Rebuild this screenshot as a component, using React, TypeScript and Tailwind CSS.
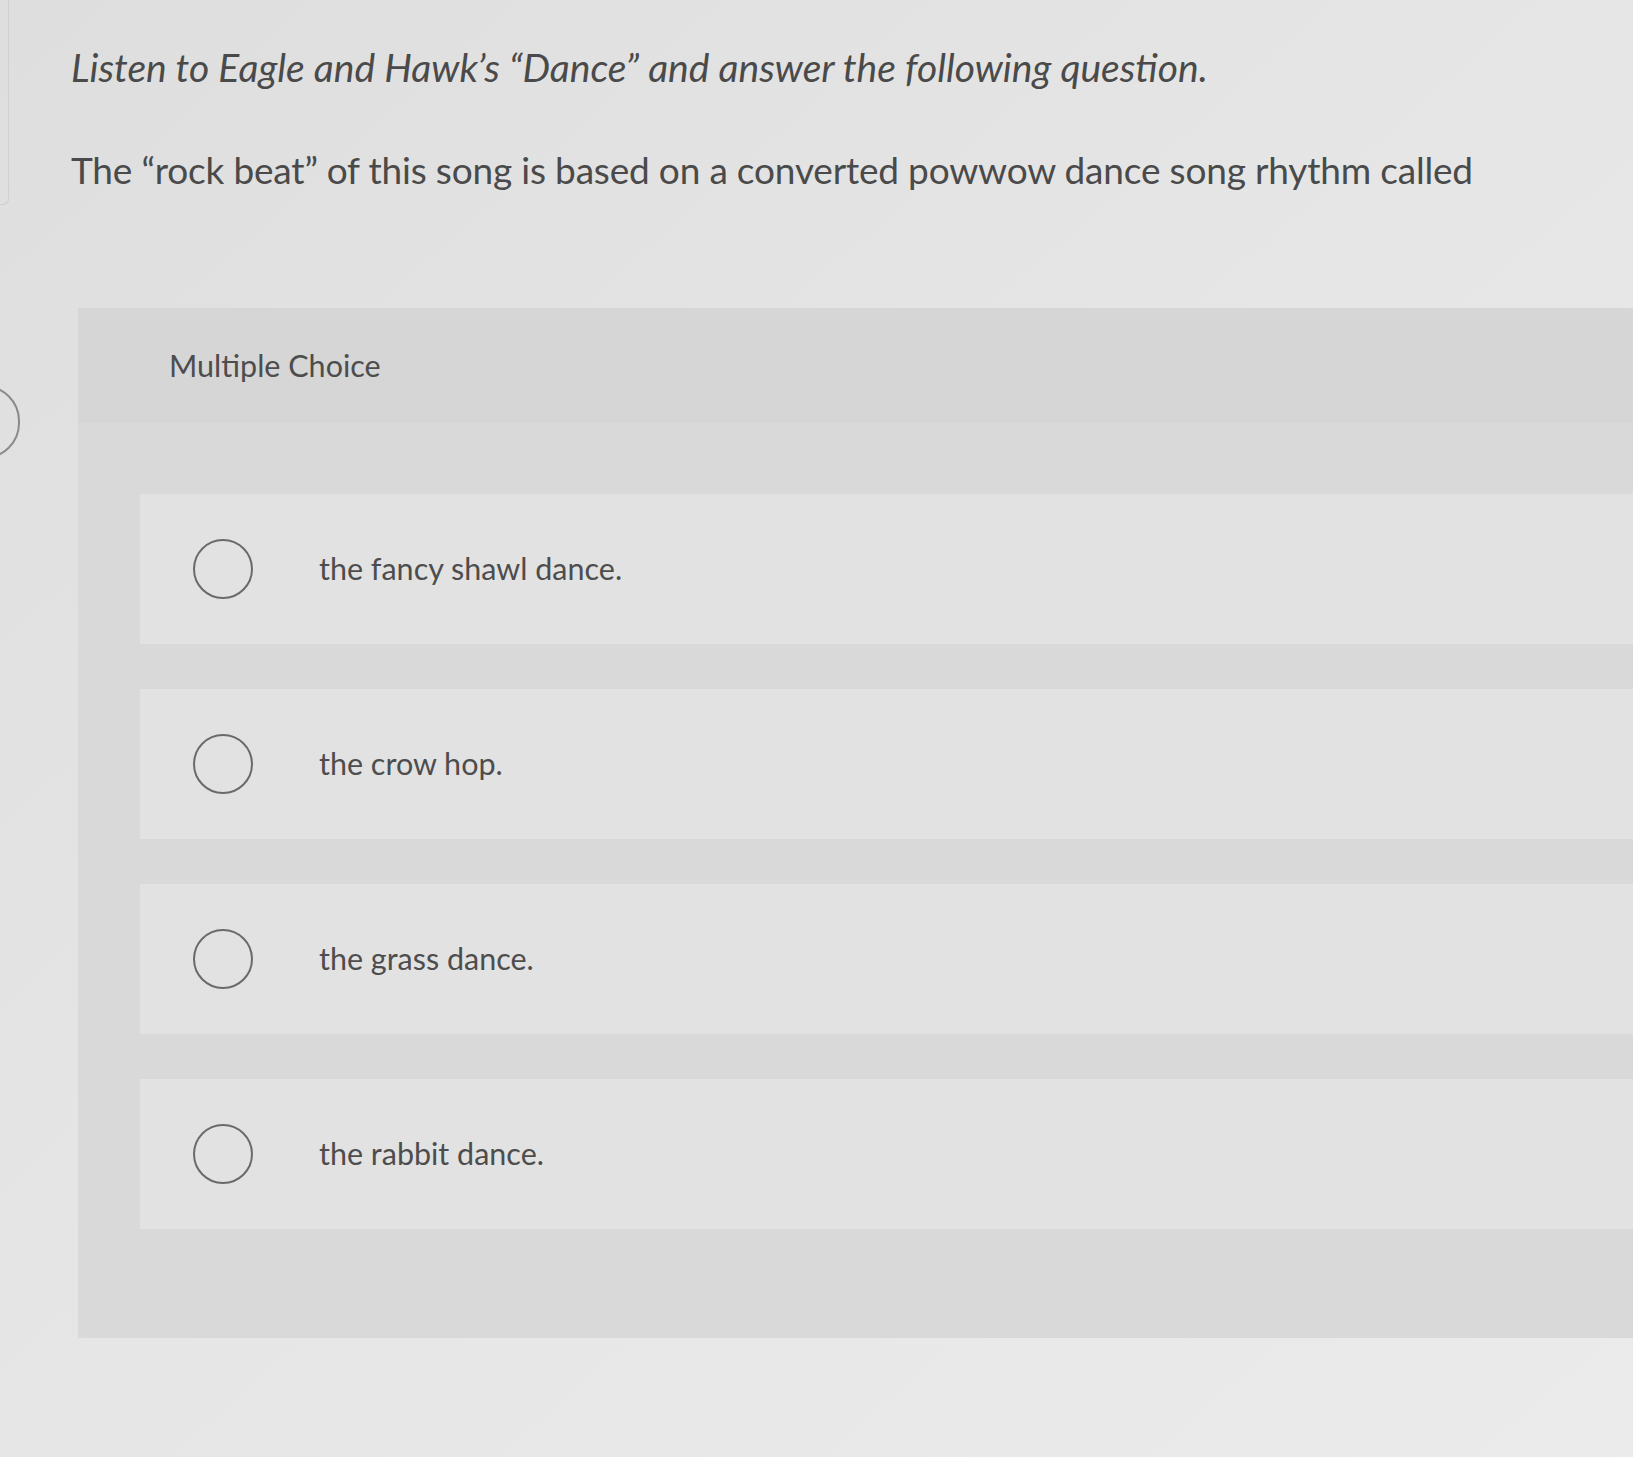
import React from 'react';

const choices = [
  'the fancy shawl dance.',
  'the crow hop.',
  'the grass dance.',
  'the rabbit dance.',
];

export default function App() {
  return (
    <div className="relative min-h-screen overflow-hidden bg-linear-to-br from-[#dedede] via-[#e6e6e6] to-[#ebebeb] font-['Lato',sans-serif] text-[#4a4a4a]">
      {/* collapsed side toggle peeking in from the left */}
      <div className="absolute left-[-52px] top-[385px] h-[74px] w-[72px] rounded-full border-2 border-[#8a8a8a]" />
      <div className="absolute left-0 top-0 h-[205px] w-[9px] rounded-br-md border-r border-b border-[#cfcfcf]" />

      <div className="pl-[71px] pt-[48px]">
        <p className="text-[39px] italic leading-none">
          Listen to Eagle and Hawk’s “Dance” and answer the following question.
        </p>
        <p className="mt-[64px] text-[37px] leading-none tracking-[-0.005em]">
          The “rock beat” of this song is based on a converted powwow dance song rhythm called
        </p>
      </div>

      <section className="ml-[78px] mt-[120px] bg-[#d9d9d9] pb-[109px]">
        <div className="flex h-[115px] items-center bg-[#d6d6d6] pl-[91px] text-[30.5px] text-[#4d4d4d]">
          Multiple Choice
        </div>
        <div className="flex flex-col gap-[45px] pl-[62px] pt-[71px]">
          {choices.map((c) => (
            <label
              key={c}
              className="flex h-[150px] cursor-pointer items-center gap-[66px] bg-[#e2e2e2] pl-[53px] text-[30.5px] text-[#4d4d4d]"
            >
              <span className="h-[60px] w-[60px] shrink-0 rounded-full border-2 border-[#6a6a6a]" />
              <span>{c}</span>
            </label>
          ))}
        </div>
      </section>
    </div>
  );
}
